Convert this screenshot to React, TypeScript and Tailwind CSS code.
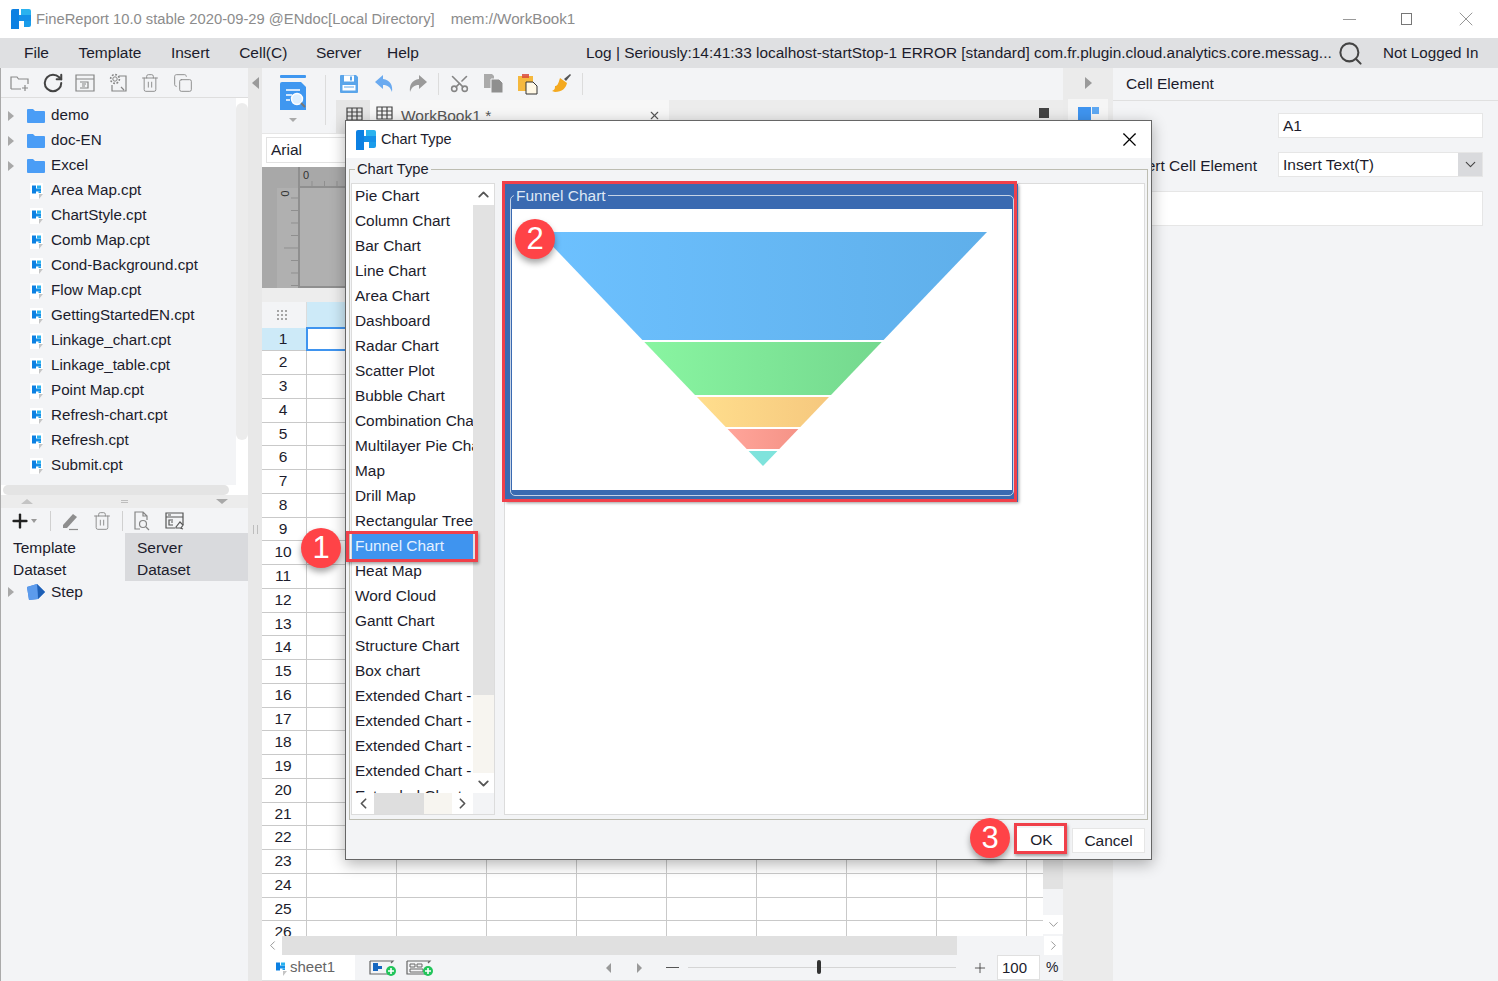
import React from "react";
import { ChevronDown, ChevronLeft, ChevronRight, ChevronUp, Copy, Minus, Plus, RotateCw, Scissors, Search, Trash2, X } from "lucide-react";

const Logo = ({ s = 20 }: { s?: number }) => (
  <svg width={s} height={s} viewBox="0 0 20 20">
    <path d="M2 0h6v20H0V2a2 2 0 0 1 2-2z" fill="#0c80e2" />
    <path d="M8 6h12v6H8z" fill="#1490e8" />
    <path d="M10 0h8a2 2 0 0 1 2 2v4H10z" fill="#2ab2ef" />
    <path d="M13 12h7v4a2 2 0 0 1-2 2h-5z" fill="#1a9cea" />
  </svg>
);

const FileIcon = () => (
  <svg width="16" height="16" viewBox="0 0 16 16" className="shrink-0">
    <path d="M2 0h13v11l-4 5H2z" fill="#fff" />
    <path d="M11 16l4-5h-4z" fill="#c4c4c4" />
    <path d="M4 2.5h4v8H4z" fill="#0c80e2" />
    <path d="M8 5.5h5v3H8z" fill="#1490e8" />
    <path d="M9 2.5h4v3H9z" fill="#2ab2ef" />
    <path d="M10.5 8.5H13V10h-2.5z" fill="#1a9cea" />
  </svg>
);

const Folder = () => (
  <svg width="18" height="16" viewBox="0 0 18 16" className="shrink-0">
    <path d="M0 2a1 1 0 0 1 1-1h5l2 2h9a1 1 0 0 1 1 1v10a1 1 0 0 1-1 1H1a1 1 0 0 1-1-1z" fill="#4a9df6" />
  </svg>
);

const Tri = () => <span className="w-0 h-0 border-y-[5px] border-y-transparent border-l-[6px] border-l-[#a8a8a8] shrink-0" />;

const GridGlyph = () => (
  <svg width="17" height="14" viewBox="0 0 17 14" fill="none" stroke="#444" strokeWidth="1.2" className="shrink-0">
    <path d="M1 1h15v12H1zM1 5h15M1 9h15M6 1v12M11 1v12" />
  </svg>
);

const Fold = () => (
  <svg width="20" height="20" viewBox="0 0 20 20" fill="none" stroke="#8a8a8a" strokeWidth="1.2">
    <path d="M1 16V4h6l1.5 2H18v5M1 16h10M15 12v6M12 15h6" />
  </svg>
);

const Tpl = () => (
  <svg width="20" height="20" viewBox="0 0 20 20" fill="none" stroke="#858585" strokeWidth="1.2">
    <path d="M1 2h18v16H1zM1 6h18M5 9h8v6H5M7 11h4M7 13h3" />
  </svg>
);

const Gear = () => (
  <svg width="20" height="20" viewBox="0 0 20 20" fill="none" stroke="#858585" strokeWidth="1.2">
    <path d="M11 3h7v15H4v-6M13 14l3 3" />
    <circle cx="7" cy="6" r="2.2" strokeWidth="1" />
    <circle cx="7" cy="6" r="4.4" strokeWidth="1.6" strokeDasharray="1.8 1.6" />
  </svg>
);

const SmallSearchDoc = () => (
  <svg width="18" height="20" viewBox="0 0 18 20" fill="none" stroke="#858585" strokeWidth="1.2">
    <path d="M7 18H2V1h8l4 4v4M10 1v4h4" />
    <circle cx="10" cy="13" r="3.5" />
    <path d="M13 16l3 3" />
  </svg>
);

const ServerDs = () => (
  <svg width="19" height="18" viewBox="0 0 19 18" fill="none" stroke="#555" strokeWidth="1.2">
    <path d="M10 16H1V1h17v12M1 5h17M3 3h3M8 8H4v5h4M6 10h2" />
    <path d="M11 15l4-5 3 3-2 3h-5zM15 16l3 1" />
  </svg>
);

const Pen = () => (
  <svg width="20" height="20" viewBox="0 0 20 20">
    <path d="M3 14L13 3l4 3L7 17H3z" fill="#8e8e8e" />
    <path d="M9 18.5h9" stroke="#8e8e8e" strokeWidth="1.2" />
  </svg>
);

const Step = () => (
  <svg width="22" height="18" viewBox="0 0 22 18">
    <path d="M2 4l10-3 8 8-7 7-9 1z" fill="#3d7fdb" />
    <path d="M12 1l8 8-7 7z" fill="#1d5fb5" />
    <path d="M2 4l10-3 1 15-9 1z" fill="#5c9bec" />
  </svg>
);

const BigReport = () => (
  <svg width="28" height="37" viewBox="0 0 28 37">
    <rect x="1" y="0" width="26" height="3" rx="1" fill="#3f97f0" />
    <path d="M1 9a2 2 0 0 1 2-2h19l5 5v23H1z" fill="#3f97f0" />
    <path d="M7 15h14M7 20h6M7 25h4" stroke="#fff" strokeWidth="1.6" />
    <circle cx="18" cy="24" r="5.5" fill="#dff0ff" stroke="#fff" strokeWidth="1.4" />
    <path d="M22 28l4 4" stroke="#777" strokeWidth="2" />
  </svg>
);

const SaveIcon = () => (
  <svg width="20" height="20" viewBox="0 0 20 20" className="shrink-0">
    <path d="M1 2a1 1 0 0 1 1-1h15l2 2v15a1 1 0 0 1-1 1H2a1 1 0 0 1-1-1z" fill="#5aa5ea" />
    <rect x="5" y="1.5" width="10" height="6" fill="#fff" />
    <rect x="11" y="2.5" width="2" height="4" fill="#5aa5ea" />
    <rect x="3.5" y="11" width="13" height="5.5" fill="#fff" />
    <path d="M5 13h10" stroke="#5aa5ea" />
  </svg>
);

const Arrow = ({ c, flip }: { c: string; flip?: boolean }) => (
  <svg width="21" height="20" viewBox="0 0 21 20" className="shrink-0" style={flip ? { transform: "scaleX(-1)" } : undefined}>
    <path d="M9 1L1 8l8 7v-4c5 0 7 2 9 7 1-7-2-12-9-13z" fill={c} />
  </svg>
);

const CopyFiles = () => (
  <svg width="21" height="21" viewBox="0 0 21 21" className="shrink-0">
    <path d="M1 1h8l2 2v12H1z" fill="#aaa" />
    <path d="M8 6h8l4 4v10H8z" fill="#8f8f8f" stroke="#f3f4f6" />
  </svg>
);

const Paste = () => (
  <svg width="21" height="22" viewBox="0 0 21 22" className="shrink-0">
    <path d="M1 3h15v15H1z" fill="#f5b83d" />
    <rect x="5" y="1" width="7" height="4" fill="#d94a3a" opacity="0.85" />
    <path d="M9 9h7l4 4v8H9z" fill="#fff8e6" stroke="#333" />
  </svg>
);

const Brush = () => (
  <svg width="21" height="21" viewBox="0 0 21 21" className="shrink-0">
    <path d="M13 6l6-5 1 1-5 6z" fill="#555" />
    <path d="M9 5l7 5c-1 5-5 9-12 9l-3-1c3-1 3-3 3-5 2 0 3-1 5-8z" fill="#f4a91f" />
  </svg>
);

const AddIcon = ({ kind }: { kind: "r" | "f" }) => (
  <svg width="28" height="16" viewBox="0 0 28 16">
    <path d="M1 1h23l-2 2M1 1v13h18" fill="none" stroke="#666" strokeWidth="1.2" />
    {kind === "r" ? (
      <path d="M4 3h5v8H4zM9 6h4v3H9z" fill="#1667c0" />
    ) : (
      <path d="M4 4h5v3H4zM11 4h5v3h-5zM4 9h13v3H4z" fill="none" stroke="#666" />
    )}
    <circle cx="22" cy="11" r="5" fill="#22c45a" />
    <path d="M19 11h6M22 8v6" stroke="#fff" strokeWidth="1.6" />
  </svg>
);

const RulerTop = () => (
  <svg width="760" height="20" viewBox="0 0 760 20" fill="none" stroke="#8f8f8f">
    {Array.from({ length: 60 }, (_, i) => <path key={i} d={`M${12 + i * 12.5} 14v6`} />)}
  </svg>
);

const RulerLeft = () => (
  <svg width="21" height="100" viewBox="0 0 21 100" fill="none" stroke="#8f8f8f">
    {Array.from({ length: 8 }, (_, i) => <path key={i} d={i === 4 ? `M7 ${10 + i * 12.5}h14` : `M14 ${10 + i * 12.5}h7`} />)}
  </svg>
);

const files = ["Area Map.cpt", "ChartStyle.cpt", "Comb Map.cpt", "Cond-Background.cpt", "Flow Map.cpt", "GettingStartedEN.cpt", "Linkage_chart.cpt", "Linkage_table.cpt", "Point Map.cpt", "Refresh-chart.cpt", "Refresh.cpt", "Submit.cpt"];
const charts = ["Pie Chart", "Column Chart", "Bar Chart", "Line Chart", "Area Chart", "Dashboard", "Radar Chart", "Scatter Plot", "Bubble Chart", "Combination Chart", "Multilayer Pie Chart", "Map", "Drill Map", "Rectangular Tree", "Funnel Chart", "Heat Map", "Word Cloud", "Gantt Chart", "Structure Chart", "Box chart", "Extended Chart -", "Extended Chart -", "Extended Chart -", "Extended Chart -", "Extended Chart -"];
const rows = Array.from({ length: 26 }, (_, i) => i + 1);
const cols = Array.from({ length: 8 }, (_, i) => i);

const Badge = ({ n, cls }: { n: number; cls: string }) => (
  <div className={`absolute w-10 h-10 rounded-full bg-[#ff4347] text-white text-[31px] leading-10 text-center shadow-[0_4px_6px_rgba(0,0,0,0.35)] ${cls}`}>{n}</div>
);

export default function App() {
  return (
    <div className="relative w-[1498px] h-[981px] overflow-hidden bg-[#f3f4f6] text-[#1c1c2c] text-[15.5px] flex flex-col font-['Liberation_Sans',Arial,sans-serif]">
      {/* Title bar */}
      <div className="h-[38px] bg-white flex items-center pl-[11px] shrink-0">
        <Logo />
        <span className="ml-[5px] text-[14.75px] text-[#8c8c8c]">FineReport 10.0 stable 2020-09-29 @ENdoc[Local Directory]</span>
        <span className="ml-4 text-[15.2px] text-[#8c8c8c]">mem://WorkBook1</span>
        <div className="ml-auto flex items-center pr-[20px] text-[#8a8a8a]">
          <Minus size={21} strokeWidth={1} />
          <span className="ml-[41px] w-[11px] h-[12px] border border-[#777]" />
          <X size={24} strokeWidth={0.9} className="ml-[42px]" />
        </div>
      </div>

      {/* Menu bar */}
      <div className="h-[30px] bg-[#dfe0e2] flex items-center pl-6 shrink-0">
        <div className="flex gap-[28.5px] w-[562px] shrink-0">
          <span className="mr-[1px]">File</span>
          <span className="mr-[1px]">Template</span>
          <span className="mr-[1px]">Insert</span>
          <span>Cell(C)</span>
          <span className="-mr-[3px]">Server</span>
          <span>Help</span>
        </div>
        <span className="w-[746px] shrink-0 text-[15.4px] whitespace-nowrap">Log | Seriously:14:41:33 localhost-startStop-1 ERROR [standard] com.fr.plugin.cloud.analytics.core.messag...</span>
        <Search size={27} strokeWidth={1.8} className="ml-[5px] text-[#444] shrink-0" />
        <span className="ml-[19px] text-[15.2px] whitespace-nowrap">Not Logged In</span>
      </div>

      {/* Body */}
      <div className="flex flex-1 min-h-0">
        {/* Left panel */}
        <div className="w-[248px] flex flex-col shrink-0 border-l border-[#aaa]">
          <div className="h-[30px] border-b border-[#dedede] flex items-center pl-[9px] gap-[12.5px]">
            <Fold />
            <RotateCw size={22} strokeWidth={2.2} className="text-[#444] -mx-[1px]" />
            <Tpl />
            <Gear />
            <Trash2 size={20} strokeWidth={1.1} className="text-[#888]" />
            <Copy size={20} strokeWidth={1.1} className="text-[#888]" />
          </div>
          <div className="h-[387px] flex text-[15.2px]">
            <div className="w-[235px] pt-[5px] overflow-hidden">
              {["demo", "doc-EN", "Excel"].map((t) => (
                <div key={t} className="h-[25px] flex items-center pl-[7px]">
                  <Tri />
                  <span className="ml-[13px]"><Folder /></span>
                  <span className="ml-[6px]">{t}</span>
                </div>
              ))}
              {files.map((t) => (
                <div key={t} className="h-[25px] flex items-center pl-[27px]">
                  <FileIcon />
                  <span className="ml-[7px] whitespace-nowrap">{t}</span>
                </div>
              ))}
            </div>
            <div className="w-[12px] bg-white pt-[5px]">
              <div className="h-[337px] bg-[#ececec] rounded-md" />
            </div>
          </div>
          <div className="h-[10px] bg-white px-[2px]">
            <div className="h-full w-[226px] bg-[#e4e4e4] rounded-md" />
          </div>
          <div className="h-[13px] bg-[#ececec] flex items-center justify-between px-[20px]">
            <span className="w-0 h-0 border-x-[6px] border-x-transparent border-b-[5px] border-b-[#c4c4c4]" />
            <span className="w-[7px] h-[3px] border-y border-[#bdbdbd]" />
            <span className="w-0 h-0 border-x-[6px] border-x-transparent border-t-[5px] border-t-[#a8a8a8]" />
          </div>
          <div className="h-[25px] flex items-center pl-[8px]">
            <span className="flex items-center">
              <Plus size={22} strokeWidth={2.6} className="text-[#222]" />
              <span className="w-0 h-0 border-x-[3px] border-x-transparent border-t-[4px] border-t-[#999]" />
            </span>
            <span className="ml-[13px] w-px h-5 bg-[#d0d0d0]" />
            <span className="ml-[9px]"><Pen /></span>
            <Trash2 size={20} strokeWidth={1.1} className="ml-[12px] text-[#888]" />
            <span className="ml-[10px] w-px h-5 bg-[#d0d0d0]" />
            <span className="ml-[10px]"><SmallSearchDoc /></span>
            <span className="ml-[14px]"><ServerDs /></span>
          </div>
          <div className="grid grid-cols-[124px_1fr] h-[47px] leading-[22px] shrink-0">
            <div className="pl-[12px] pt-[4px]">Template<br />Dataset</div>
            <div className="pl-[12px] pt-[4px] bg-[#d9dadd]">Server<br />Dataset</div>
          </div>
          <div className="h-[23px] flex items-center pl-[7px]">
            <Tri />
            <span className="ml-[11px] flex"><Step /></span>
            <span className="ml-[4px]">Step</span>
          </div>
        </div>

        {/* Splitter */}
        <div className="w-[14px] bg-[#e8e8e8] shrink-0 flex flex-col items-center relative">
          <span className="mt-[9px] w-0 h-0 border-y-[6px] border-y-transparent border-r-[7px] border-r-[#9a9a9a]" />
          <span className="mt-[436px] w-[5px] h-[9px] border-x border-[#bdbdbd]" />
        </div>

        {/* Center */}
        <div className="w-[801px] flex flex-col shrink-0">
          <div className="h-[32px] flex items-center relative">
            <div className="ml-[17px] w-[28px] self-start mt-[7px] relative z-10">
              <BigReport />
              <span className="block mx-auto mt-[6px] w-0 h-0 border-x-[4px] border-x-transparent border-t-[4px] border-t-[#aaa]" />
            </div>
            <span className="ml-[18px] w-px h-[50px] bg-[#dcdcdc] self-start mt-[7px]" />
            <div className="flex items-center ml-[13px] -mt-[1px]">
              <SaveIcon />
              <span className="ml-[15px]"><Arrow c="#6aaaf0" /></span>
              <span className="ml-[12px]"><Arrow c="#9a9a9a" flip /></span>
              <span className="ml-[10px] w-px h-[22px] bg-[#dcdcdc]" />
              <Scissors size={21} strokeWidth={1.8} className="ml-[10px] text-[#858585] shrink-0 -rotate-90" />
              <span className="ml-[13px]"><CopyFiles /></span>
              <span className="ml-[13px]"><Paste /></span>
              <span className="ml-[13px]"><Brush /></span>
              <span className="ml-[10px] w-px h-[22px] bg-[#dcdcdc]" />
            </div>
          </div>
          <div className="h-[33px] flex pl-[74px]">
            <div className="w-[34px] bg-[#e6e6e6] flex justify-center pt-[7px] pl-[2px]"><GridGlyph /></div>
            <div className="w-[299px] bg-[#f7f7f7] flex items-start gap-2 pl-[6px] pt-[6px]">
              <GridGlyph />
              <span className="text-[#555] leading-[20px]">WorkBook1 *</span>
              <X size={13} className="ml-auto mr-2 mt-[3px] text-[#555]" />
            </div>
            <div className="flex-1 bg-[#ececec] flex justify-end pr-[14px] pt-[8px]">
              <span className="w-[10px] h-[10px] bg-[#444]" />
            </div>
          </div>
          <div className="h-[34px] bg-white flex items-center pl-[4px] border-t border-[#e6e6e6] pb-[2px]">
            <div className="w-[200px] h-[26px] border border-[#e2e2e2] bg-white pl-[4px] leading-[24px]">Arial</div>
          </div>
          <div className="h-[121px] bg-[#a8a8a8] flex">
            <div className="w-[36px] flex flex-col shrink-0">
              <div className="h-[21px]" />
              <div className="flex-1 ml-[15px] bg-[#b0b0b0] relative">
                <span className="absolute left-[4px] top-0 text-[11px] leading-[11px] rotate-90 text-[#333]">0</span>
                <RulerLeft />
              </div>
            </div>
            <div className="flex-1 flex flex-col border-l-2 border-[#8f8f8f] min-w-0">
              <div className="h-[21px] border-b-2 border-[#8f8f8f] relative overflow-hidden">
                <RulerTop />
                <span className="absolute left-[3px] top-[1px] text-[11px] leading-[14px] text-[#333]">0</span>
              </div>
              <div className="flex-1 bg-[#b0b0b0] border-b-2 border-[#8f8f8f]" />
            </div>
          </div>
          <div className="h-[14px] bg-[#ededed]" />
          <div className="h-[634px] flex">
            <div className="w-[781px] overflow-hidden bg-white">
              <div className="h-[25.5px] flex">
                <div className="w-[45px] bg-[#f3f4f6] border-r border-[#dcdcdc] flex items-center justify-center pr-[4px]">
                  <span className="grid grid-cols-3 gap-[1.5px]">
                    {cols.concat(0).map((c, i) => <span key={i} className="w-[2.5px] h-[2.5px] bg-[#a5a5a5]" />)}
                  </span>
                </div>
                <div className="w-[90px] bg-[#cdeaf8]" />
                <div className="flex-1 bg-[#f3f4f6]" />
              </div>
              {rows.map((r) => (
                <div key={r} className="h-[23.75px] flex border-b border-[#c9c9c9]">
                  <div className={`w-[45px] shrink-0 text-center text-[15.5px] leading-[22px] pr-[2px] border-r border-[#c9c9c9] ${r === 1 ? "bg-[#cdeaf8]" : "bg-white"}`}>{r}</div>
                  {cols.map((c) => (
                    <div key={c} className={`w-[90px] shrink-0 ${r === 1 && c === 0 ? "outline-2 -outline-offset-1 outline-[#3f94ef]" : "border-r border-[#c9c9c9]"}`} />
                  ))}
                </div>
              ))}
            </div>
            <div className="w-[20px] bg-[#f3f4f6] flex flex-col">
              <div className="h-[587px] bg-[#e2e2e2]" />
              <div className="flex-1" />
              <div className="h-[19px] bg-white flex items-center justify-center mb-[2px]"><ChevronDown size={15} strokeWidth={1.2} className="text-[#777]" /></div>
            </div>
          </div>
          <div className="h-[19px] flex items-stretch">
            <div className="w-[20px] bg-white flex items-center justify-center"><ChevronLeft size={15} strokeWidth={1.2} className="text-[#777]" /></div>
            <div className="w-[675px] bg-[#e0e0e0]" />
            <div className="flex-1" />
            <div className="w-[18px] bg-white flex items-center justify-center mr-[1px]"><ChevronRight size={15} strokeWidth={1.2} className="text-[#777]" /></div>
          </div>
          <div className="h-[26px] flex items-center border-b border-[#e0e0e0]">
            <div className="w-[93px] h-full bg-white flex items-center pl-[10px] text-[#666] text-[15px]">
              <FileIcon />
              <span className="ml-[2px]">sheet1</span>
            </div>
            <span className="ml-[14px]"><AddIcon kind="r" /></span>
            <span className="ml-[9px]"><AddIcon kind="f" /></span>
            <span className="ml-[172px] w-0 h-0 border-y-[5px] border-y-transparent border-r-[5px] border-r-[#999]" />
            <span className="ml-[26px] w-0 h-0 border-y-[5px] border-y-transparent border-l-[5px] border-l-[#999]" />
            <span className="ml-[24px] w-[13px] h-[1.5px] bg-[#555]" />
            <div className="ml-[9px] w-[268px] h-[1px] bg-[#d5d5d5] relative">
              <span className="absolute left-[129px] -top-[7px] w-[4px] h-[14px] rounded-sm bg-[#333]" />
            </div>
            <Plus size={16} strokeWidth={1.2} className="ml-[16px] text-[#333]" />
            <div className="ml-[9px] w-[43px] h-full bg-white border border-[#e0e0e0] pl-[4px] text-[15px] leading-[24px]">100</div>
            <span className="ml-[6px] text-[14px]">%</span>
          </div>
        </div>

        {/* Right strip */}
        <div className="w-[50px] bg-[#ebebeb] shrink-0 flex flex-col items-center">
          <span className="mt-[9px] w-0 h-0 border-y-[6px] border-y-transparent border-l-[7px] border-l-[#9a9a9a]" />
          <div className="mt-[10px] w-10 h-[40px] bg-[#f5f5f5] flex justify-center gap-[1px] pt-[8px]">
            <span className="w-[13px] h-[13px] bg-[#3f94ef]" />
            <span className="w-[7px] h-[7px] bg-[#5ea8f2]" />
          </div>
        </div>

        {/* Right panel */}
        <div className="flex-1 flex flex-col min-w-0">
          <div className="h-[33px] border-b border-[#e0e0e0] pl-[13px] leading-[31px]">Cell Element</div>
          <div className="flex flex-col pr-[15px] pt-[12px]">
            <div className="flex items-center justify-end">
              <span className="mr-[127px]">Cell</span>
              <div className="w-[205px] h-[25px] bg-white border border-[#e6e6e6] pl-[4px] leading-[23px]">A1</div>
            </div>
            <div className="flex items-center justify-end mt-[13px]">
              <span className="mr-[21px] mt-[3px] whitespace-nowrap">Insert Cell Element</span>
              <div className="w-[205px] h-[25px] bg-white border border-[#e6e6e6] flex">
                <span className="flex-1 pl-[4px] leading-[23px]">Insert Text(T)</span>
                <span className="w-[24px] bg-[#d9dadd] flex items-center justify-center"><ChevronDown size={17} strokeWidth={1.6} className="text-[#444]" /></span>
              </div>
            </div>
            <div className="ml-[10px] mt-[14px] h-[35px] bg-white border border-[#e6e6e6]" />
          </div>
        </div>
      </div>

      {/* Dialog */}
      <div className="absolute left-[345px] top-[120px] w-[807px] h-[740px] bg-[#f3f4f6] border border-[#666] shadow-[0_4px_14px_rgba(0,0,0,0.3)] flex flex-col">
        <div className="h-[37px] bg-white flex items-center pl-[10px] shrink-0">
          <Logo />
          <span className="ml-[5px] text-[14.5px]">Chart Type</span>
          <X size={23} strokeWidth={1.2} className="ml-auto mr-[10px] text-black" />
        </div>
        <fieldset className="mx-[3px] mt-[1px] border border-[#bdbdb2] h-[661px] pl-[2px] pr-[2px] min-w-0">
          <legend className="ml-[3px] px-[2px] text-[14.7px] leading-[20px]">Chart Type</legend>
          <div className="flex h-[632px] mt-[4px]">
            <div className="w-[144px] border border-[#dcdcdc] bg-white flex flex-col shrink-0 -ml-px">
              <div className="flex h-[609px]">
                <div className="w-[121px] overflow-hidden shrink-0 text-[15.4px]">
                  {charts.map((c, i) => (
                    <div key={i} className={`h-[25px] pl-[3px] leading-[24px] whitespace-nowrap overflow-hidden ${c === "Funnel Chart" ? "bg-[#3f94ef] text-[#e4f1ff]" : ""}`}>
                      {c}
                      {i >= 21 && i <= 23 ? <span className="inline-block ml-[4px] w-[2px] h-[12px] align-middle bg-[#f8dca0]" /> : null}
                    </div>
                  ))}
                </div>
                <div className="flex-1 bg-[#e2e2e2] flex flex-col">
                  <div className="h-[21px] bg-white flex items-center justify-center"><ChevronUp size={17} strokeWidth={2.6} className="text-[#555]" /></div>
                  <div className="h-[490px]" />
                  <div className="flex-1 bg-[#f7f5f0]" />
                  <div className="h-[20px] bg-white flex items-center justify-center"><ChevronDown size={17} strokeWidth={2.6} className="text-[#555]" /></div>
                </div>
              </div>
              <div className="flex-1 flex">
                <div className="w-[22px] bg-white flex items-center justify-center"><ChevronLeft size={17} strokeWidth={2.4} className="text-[#555]" /></div>
                <div className="w-[50px] bg-[#dedede]" />
                <div className="w-[28px] bg-[#f7f5f0]" />
                <div className="w-[21px] bg-white flex items-center justify-center"><ChevronRight size={17} strokeWidth={2.4} className="text-[#555]" /></div>
                <div className="flex-1 bg-[#f3f4f6]" />
              </div>
            </div>
            <div className="ml-[9px] w-[641px] border border-[#dcdcdc] bg-white shrink-0">
              <div className="w-[513px] h-[318px] bg-[#3a6ab1] shadow-[1px_1px_3px_rgba(0,0,0,0.4)] pl-[5px] pr-[4px] pb-[6px] pt-[2px]">
                <fieldset className="border border-[#c6d3e6] rounded-[5px] h-full px-px pb-[2px] min-w-0">
                  <legend className="ml-[2px] px-[2px] text-[#dfe8f5] leading-[19px]">Funnel Chart</legend>
                  <div className="bg-white h-[281px] mt-[4px]">
                    <svg width="500" height="281" viewBox="0 0 500 281">
                      <defs>
                        <linearGradient id="b"><stop offset="0" stopColor="#6dc1ff" /><stop offset="1" stopColor="#5fafea" /></linearGradient>
                        <linearGradient id="g"><stop offset="0" stopColor="#89f5a1" /><stop offset="1" stopColor="#74d88e" /></linearGradient>
                        <linearGradient id="y"><stop offset="0" stopColor="#ffde8d" /><stop offset="1" stopColor="#f6c87e" /></linearGradient>
                        <linearGradient id="r"><stop offset="0" stopColor="#ffa59a" /><stop offset="1" stopColor="#f59387" /></linearGradient>
                      </defs>
                      <polygon points="27,23 475,23 371.6,131 130.4,131" fill="url(#b)" />
                      <polygon points="132.3,133 369.7,133 319,186 183,186" fill="url(#g)" />
                      <polygon points="185,188 317,188 288.3,218 213.7,218" fill="url(#y)" />
                      <polygon points="215.6,220 286.4,220 267.3,240 234.7,240" fill="url(#r)" />
                      <polygon points="236.6,242 265.4,242 251,257" fill="#7fe3dc" />
                    </svg>
                  </div>
                </fieldset>
              </div>
            </div>
          </div>
        </fieldset>
        <div className="flex-1 flex items-center justify-end gap-[5px] pr-[6px] pt-[1px]">
          <div className="w-[51px] h-[25px] bg-white text-center leading-[24px]">OK</div>
          <div className="w-[73px] h-[25px] bg-white border border-[#e6e6e6] text-center leading-[23px]">Cancel</div>
        </div>
      </div>

      {/* Annotations */}
      <div className="absolute left-[346px] top-[531px] w-[132px] h-[31px] border-[3px] border-[#f0404a] shadow-[1px_2px_3px_rgba(0,0,0,0.35)]" />
      <div className="absolute left-[502px] top-[181px] w-[515px] h-[321px] border-[3px] border-[#f0404a]" />
      <div className="absolute left-[1014px] top-[823px] w-[53px] h-[31px] border-[3px] border-[#f0404a] shadow-[1px_2px_3px_rgba(0,0,0,0.35)]" />
      <Badge n={1} cls="left-[301px] top-[528px]" />
      <Badge n={2} cls="left-[515px] top-[219px]" />
      <Badge n={3} cls="left-[970px] top-[818px]" />
    </div>
  );
}
